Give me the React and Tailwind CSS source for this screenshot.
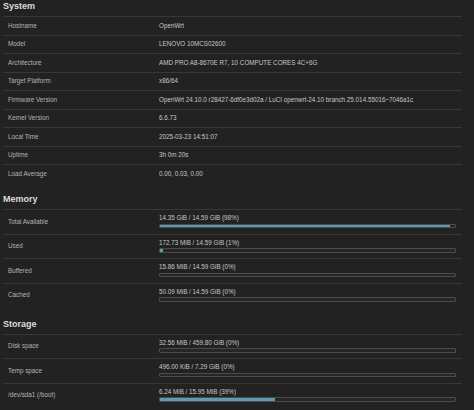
const system = [
  ['Hostname', 'OpenWrt'],
  ['Model', 'LENOVO 10MCS02600'],
  ['Architecture', 'AMD PRO A8-8670E R7, 10 COMPUTE CORES 4C+6G'],
  ['Target Platform', 'x86/64'],
  ['Firmware Version', 'OpenWrt 24.10.0 r28427-6df0e3d02a / LuCI openwrt-24.10 branch 25.014.55016~7046a1c'],
  ['Kernel Version', '6.6.73'],
  ['Local Time', '2025-03-23 14:51:07'],
  ['Uptime', '3h 0m 20s'],
  ['Load Average', '0.00, 0.03, 0.00'],
]

const memory = [
  ['Total Available', '14.35 GiB / 14.59 GiB (98%)', 98.35],
  ['Used', '172.73 MiB / 14.59 GiB (1%)', 1.16],
  ['Buffered', '15.86 MiB / 14.59 GiB (0%)', 0],
  ['Cached', '50.09 MiB / 14.59 GiB (0%)', 0],
]

const storage = [
  ['Disk space', '32.56 MiB / 459.80 GiB (0%)', 0],
  ['Temp space', '496.00 KiB / 7.29 GiB (0%)', 0],
  ['/dev/sda1 (/boot)', '6.24 MiB / 15.95 MiB (39%)', 39.1],
]

function Heading({ children, first }) {
  return (
    <h2
      className={`text-[9px] font-bold text-[#dcdcdc] leading-none pb-[5px] ${
        first ? 'pt-[2px]' : 'pt-[12.5px]'
      }`}
    >
      {children}
    </h2>
  )
}

function Bar({ pct }) {
  return (
    <div className="h-[4.5px] w-full rounded-[1px] border border-[#4c4c4c] bg-[#262626] overflow-hidden">
      <div className="h-full bg-[#5a9cb2]" style={{ width: `${pct}%` }} />
    </div>
  )
}

function MeterRow({ label, value, pct }) {
  return (
    <div className="flex h-[24.5px] items-center border-t border-[#383838]">
      <div className="w-[156px] shrink-0 pl-[5px] text-[#b4b4b4]">{label}</div>
      <div className="flex-1 pr-[6px] flex flex-col gap-[2px]">
        <div className="text-[#c6c6c6]">{value}</div>
        <Bar pct={pct} />
      </div>
    </div>
  )
}

export default function App() {
  return (
    <div
      className="min-h-[410px] w-[474px] bg-[#222222] text-[6.3px] leading-none"
      style={{ fontFamily: '"Liberation Sans", Arial, sans-serif' }}
    >
      <div className="pr-[12px] pl-[3px]">
        <Heading first>System</Heading>
        {system.map(([k, v]) => (
          <div key={k} className="flex h-[18.5px] items-center border-t border-[#383838]">
            <div className="w-[156px] shrink-0 pl-[5px] text-[#b4b4b4]">{k}</div>
            <div className="flex-1 text-[#c6c6c6] whitespace-nowrap">{v}</div>
          </div>
        ))}

        <Heading>Memory</Heading>
        {memory.map(([k, v, p]) => (
          <MeterRow key={k} label={k} value={v} pct={p} />
        ))}

        <Heading>Storage</Heading>
        {storage.map(([k, v, p]) => (
          <MeterRow key={k} label={k} value={v} pct={p} />
        ))}
      </div>
    </div>
  )
}
